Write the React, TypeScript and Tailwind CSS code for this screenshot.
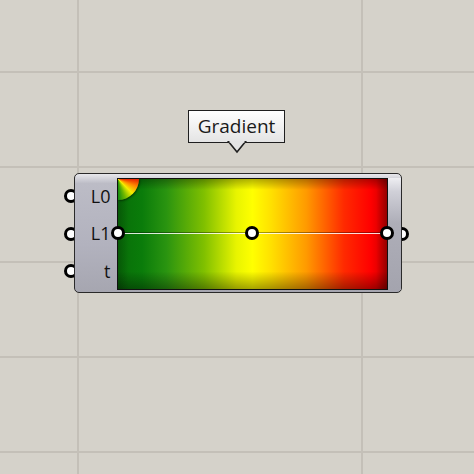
import React from 'react';

const font = { fontFamily: '"Open Sans", "Noto Sans", "Liberation Sans", sans-serif' };

const Tooltip: React.FC = () => (
  <div className="relative flex flex-col items-center">
    <div
      className="w-[97px] h-[33px] border-[1.5px] border-[#1f1f1f] bg-gradient-to-b from-white to-[#e4e4e4] flex items-center justify-center text-[19px] leading-none text-[#1a1a1a] pb-[1px]"
      style={font}
    >
      Gradient
    </div>
    <svg className="-mt-[2px]" width="20" height="13" viewBox="0 0 20 13">
      <polygon points="1,0 10,11 19,0" fill="#e4e4e4" stroke="#1f1f1f" strokeWidth="1.6" />
      <rect x="2.5" y="0" width="15" height="1.6" fill="#e4e4e4" />
    </svg>
  </div>
);

const Port: React.FC = () => (
  <div className="w-[14px] h-[14px] rounded-full border-[3.5px] border-black bg-white" />
);

const Handle: React.FC = () => (
  <div className="w-[14px] h-[14px] -mx-[7px] rounded-full border-[3px] border-black bg-white" />
);

const GradientPanel: React.FC = () => (
  <div className="relative flex-1 border-[1.5px] border-[#111]">
    <div className="absolute inset-0 bg-[linear-gradient(to_right,#086e08_0%,#0a7c0a_9%,#2a9410_18%,#80c000_32%,#e8f400_44%,#ffff00_50%,#ffe000_57%,#ff9a00_70%,#ff2a00_84%,#ff0000_94%,#c80000_100%)]" />
    {/* top / bottom shading */}
    <div className="absolute inset-0 bg-[linear-gradient(to_bottom,rgba(0,0,0,0.3)_0%,rgba(0,0,0,0)_10%,rgba(0,0,0,0)_84%,rgba(0,0,0,0.35)_100%)]" />
    <div className="absolute inset-0 bg-[linear-gradient(to_right,rgba(0,0,0,0.2)_0%,rgba(0,0,0,0)_4%,rgba(0,0,0,0)_96%,rgba(0,0,0,0.25)_100%)]" />
    {/* corner swatch */}
    <div className="absolute left-0 top-0 w-[21px] h-[21px] rounded-br-full bg-[conic-gradient(from_90deg_at_0_0,#e82000_0deg,#ff8a00_22deg,#f4ee00_45deg,#70b800_68deg,#108a10_90deg)] shadow-[1px_1px_2px_rgba(0,0,0,0.45)]" />
    {/* wire with its three stops */}
    <div className="absolute left-0 right-0 top-[47px] h-[14px] flex items-center">
      <div className="absolute left-0 right-0 top-[6px] h-px bg-[rgba(0,0,0,0.35)]" />
      <div className="absolute left-0 right-0 top-[7px] h-px bg-[rgba(255,255,255,0.85)]" />
      <div className="relative flex w-full justify-between">
        <Handle />
        <Handle />
        <Handle />
      </div>
    </div>
  </div>
);

const GradientNode: React.FC = () => (
  <div className="flex items-stretch">
    <div className="flex flex-col pt-[4px] pb-[3px] -mr-[4px]">
      <div className="flex-1 flex items-center"><Port /></div>
      <div className="flex-1 flex items-center"><Port /></div>
      <div className="flex-1 flex items-center"><Port /></div>
    </div>
    <div className="relative z-10 w-[328px] h-[120px] rounded-[5px] border-[1.5px] border-[#2a2a2a] bg-[linear-gradient(to_bottom,#e8e8ec_0%,#bcbcc6_8%,#b2b2be_60%,#a6a6b0_100%)] flex pt-[3.5px] pb-[2.5px]">
      <div className="w-[41.5px] flex flex-col pr-[6px] text-[18px] leading-none text-[#111]" style={font}>
        <div className="flex-1 flex items-center justify-end">L0</div>
        <div className="flex-1 flex items-center justify-end">L1</div>
        <div className="flex-1 flex items-center justify-end">t</div>
      </div>
      <GradientPanel />
      <div className="w-[13px] bg-[linear-gradient(to_bottom,#eeeef2_0%,#d0d0d8_12%,#aeaeb8_40%,#a4a4ae_100%)]" />
    </div>
    <div className="flex flex-col justify-center -ml-[7px] pt-[1px]">
      <Port />
    </div>
  </div>
);

const App: React.FC = () => (
  <div className="relative w-[474px] h-[474px] overflow-hidden bg-[#d5d2ca] bg-[linear-gradient(to_right,transparent_77px,#c4c0b8_77px,#c4c0b8_79px,transparent_79px,transparent_361px,#c4c0b8_361px,#c4c0b8_363px,transparent_363px),repeating-linear-gradient(to_bottom,transparent_0px,transparent_71px,#c4c0b8_71px,#c4c0b8_73px,transparent_73px,transparent_95px)]">
    {/* node on the canvas, tooltip centred above it */}
    <div className="absolute left-[64px] top-[110px] flex flex-col items-center gap-[19px]">
      <Tooltip />
      <GradientNode />
    </div>
  </div>
);

export default App;
